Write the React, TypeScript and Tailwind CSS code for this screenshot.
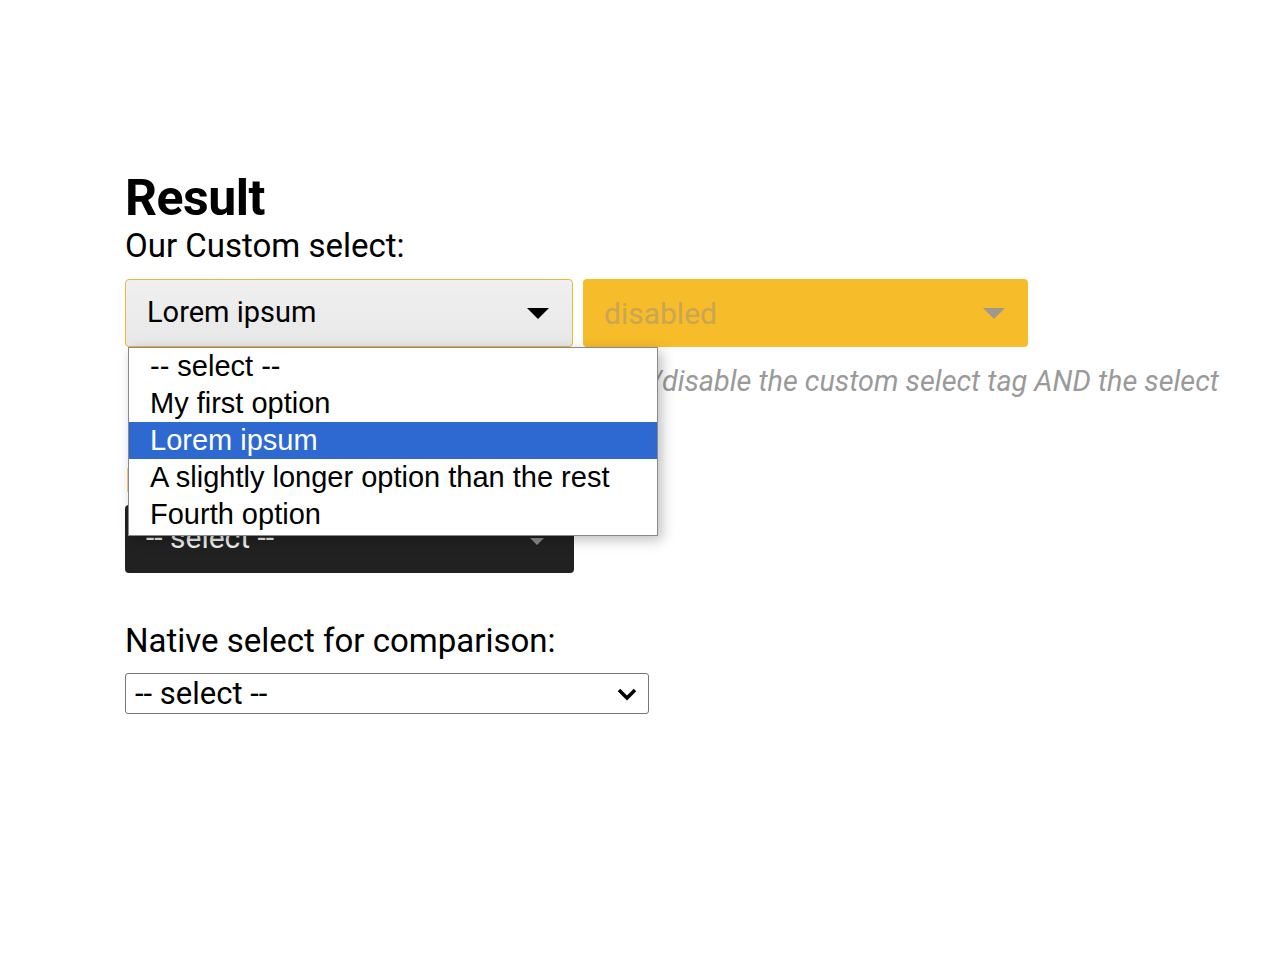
import React from "react";

const options = [
  "-- select --",
  "My first option",
  "Lorem ipsum",
  "A slightly longer option than the rest",
  "Fourth option",
];

function Caret({ className }: { className: string }) {
  return <span className={"block h-0 w-0 border-x-transparent " + className} />;
}

export default function App() {
  return (
    <div className="min-h-screen bg-white text-black" style={{ fontFamily: "Roboto, 'Liberation Sans', sans-serif" }}>
      <div className="pl-[125px] pt-[170px]">
        <h2 className="text-[50px] font-bold leading-[56px] tracking-[-0.5px]">Result</h2>
        <p className="text-[33px] leading-[40px]">Our Custom select:</p>

        {/* custom selects row */}
        <div className="mt-[13px] flex gap-[10px]">
          <div className="relative w-[448px]">
            <div className="flex h-[68px] items-center justify-between rounded-[4px] border border-[#efb733] bg-gradient-to-b from-[#f0f0f0] to-[#e8e8e8] pl-[21px] pr-[23px] text-[29px]">
              <span>Lorem ipsum</span>
              <Caret className="border-x-[11px] border-t-[11px] border-t-black" />
            </div>

            {/* open option list */}
            <ul
              className="absolute left-[3px] top-[68px] z-10 w-[530px] border border-[#8a8a8a] bg-white pb-[2px] text-[29px] shadow-[4px_4px_12px_rgba(0,0,0,0.25)]"
              style={{ fontFamily: "'Liberation Sans', Arial, sans-serif" }}
            >
              {options.map((o) => (
                <li
                  key={o}
                  className={
                    "h-[37px] pl-[21px] leading-[37px] " +
                    (o === "Lorem ipsum" ? "bg-[#2d69d1] text-white" : "text-black")
                  }
                >
                  {o}
                </li>
              ))}
            </ul>
          </div>

          <div className="flex h-[68px] w-[445px] items-center justify-between rounded-[4px] bg-[#f7bc2a] pl-[21px] pr-[23px] text-[30px] text-[#c9a556]">
            <span>disabled</span>
            <Caret className="border-x-[11px] border-t-[11px] border-t-[#a0998a]" />
          </div>
        </div>

        <p className="mt-[17px] pl-[517px] text-[28.8px] italic leading-[34px] text-[#9a9a9a]">
          //disable the custom select tag AND the select
        </p>

        <p className="mt-[63px] text-[33px] leading-[40px] text-[#e8892b]">Dark theme:</p>
        <div className="mt-[4px] flex h-[68px] w-[449px] items-center justify-between rounded-[4px] bg-[#212121] pb-[4px] pl-[21px] pr-[30px] text-[30px] text-[#eeeeee]">
          <span>-- select --</span>
          <Caret className="mt-[8px] border-x-[7px] border-t-[7px] border-t-[#8a8a8a]" />
        </div>

        <p className="mt-[48px] text-[33px] leading-[40px]">Native select for comparison:</p>
        <div className="mt-[12px] flex h-[41px] w-[524px] items-center justify-between rounded-[3px] border border-[#767676] bg-white pl-[9px] pr-[10px] text-[31px]">
          <span className="leading-none">-- select --</span>
          <svg width="22" height="14" viewBox="0 0 22 14" fill="none">
            <path d="M3 3l8 8 8-8" stroke="black" strokeWidth="3.5" />
          </svg>
        </div>
      </div>
    </div>
  );
}
